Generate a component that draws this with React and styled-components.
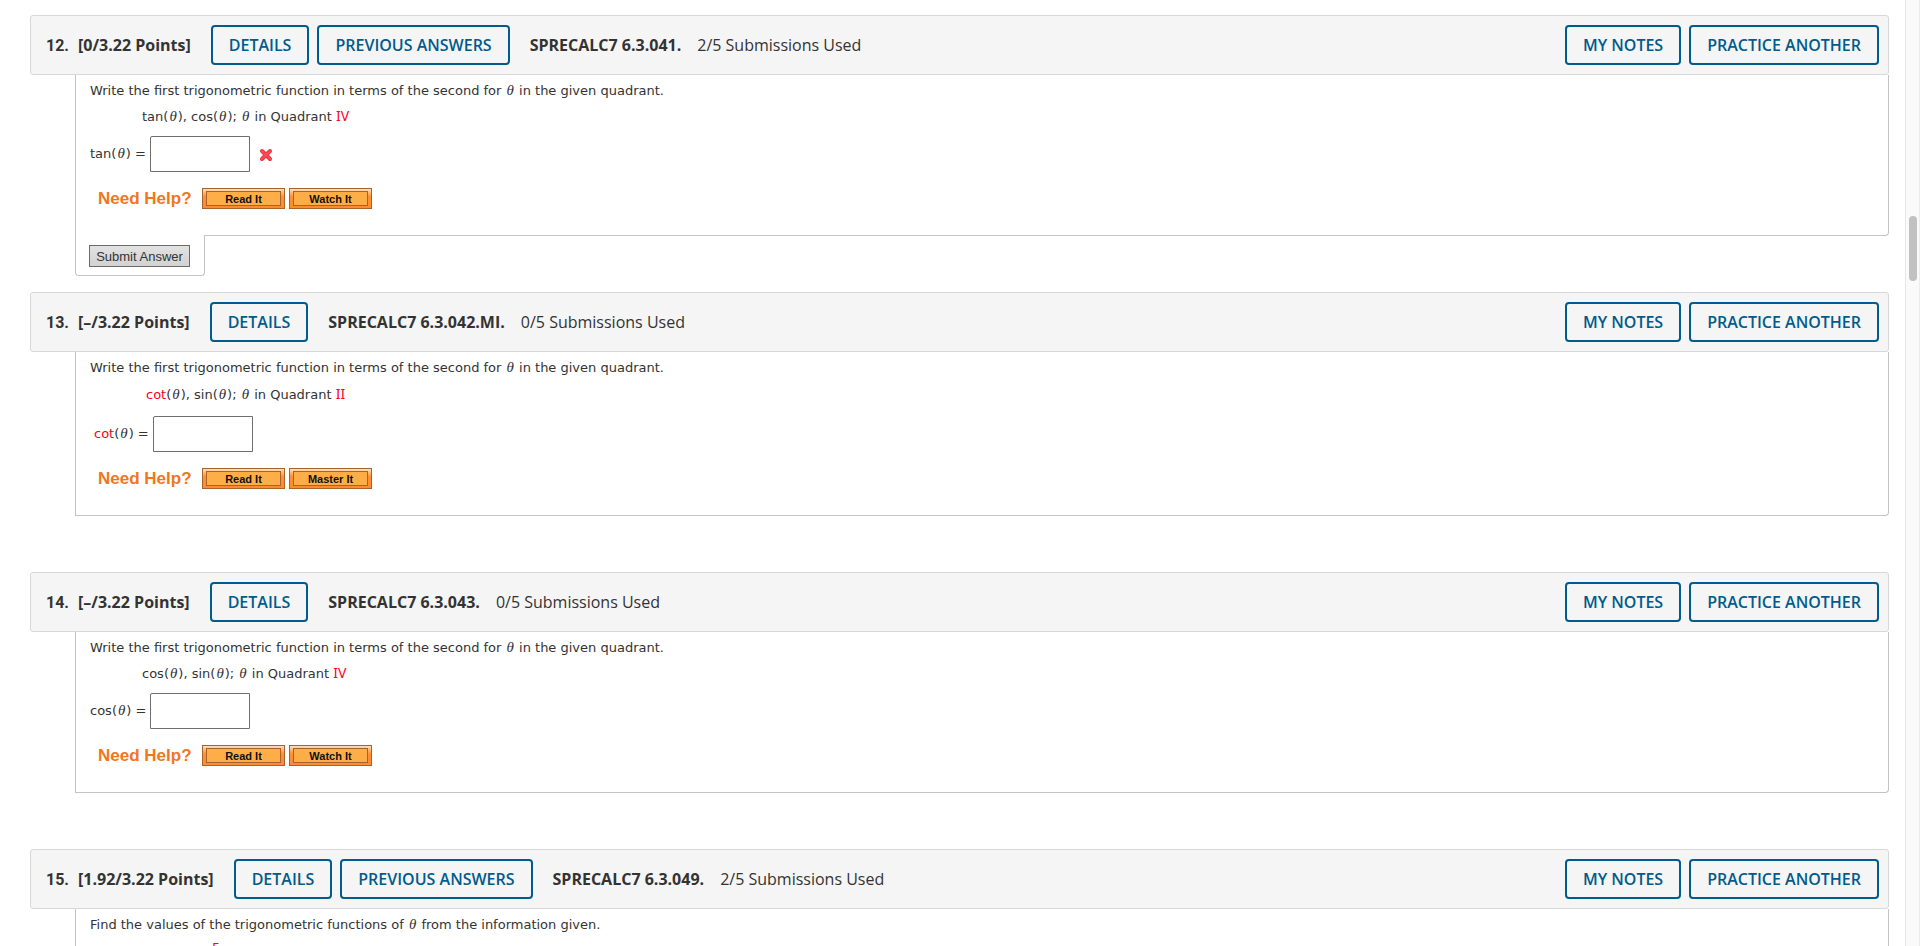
import React from "react";
import styled, { createGlobalStyle } from "styled-components";

const Global = createGlobalStyle`
  * { box-sizing: border-box; }
  html, body { margin: 0; background: #fff; }
  body { color: #333; font-family: "Open Sans", sans-serif; font-size: 16px; }
  p { margin: 0; }
`;

const Page = styled.div`
  display: flex;
  height: 100vh;
  overflow: hidden;
`;

const Questions = styled.main`
  flex: 1;
  min-width: 0;
  padding: 15px 16px 0 30px;
  overflow: hidden;
`;

const ScrollTrack = styled.div`
  width: 15px;
  flex: none;
  padding-top: 216px;
  background: #fafafa;
  border-left: 1px solid #e6e6e6;
  border-right: 1px solid #ececec;
`;

const ScrollThumb = styled.div`
  width: 8px;
  height: 65px;
  margin: 0 auto;
  border-radius: 4px;
  background: #c1c1c1;
`;

const Question = styled.section`
  margin-bottom: ${(p) => (p.$submit ? 16 : 56)}px;
`;

const Header = styled.header`
  display: flex;
  align-items: center;
  height: 60px;
  padding: 0 9px 0 15px;
  background: #f5f5f5;
  border: 1px solid #d8d8d8;
  border-radius: 3px;
  white-space: nowrap;
`;

const Number = styled.span`
  width: 32px;
  font-family: Roboto, sans-serif;
  font-weight: 700;
`;

const Points = styled.strong`
  font-weight: 700;
  margin-right: 20px;
`;

const Actions = styled.div`
  display: flex;
  gap: 8px;
  margin-left: ${(p) => (p.$end ? "auto" : "0")};
`;

const OutlineButton = styled.button`
  height: 40px;
  padding: 0 16px;
  color: #005b8e;
  background: transparent;
  border: 2px solid #005b8e;
  border-radius: 4px;
  font: 600 16px "Open Sans", sans-serif;
`;

const Code = styled.strong`
  margin: 0 16px 0 20px;
  font-weight: 700;
`;

const Panel = styled.div`
  margin-left: 45px;
  padding: 6px 14px 26px;
  border: 1px solid #c4c4c4;
  border-top: 0;
  border-radius: 0 0 4px 0;
  font: 13px/20px "DejaVu Sans", sans-serif;
`;

const Given = styled.p`
  padding-left: ${(p) => (p.$wide ? 56 : 52)}px;
  margin-top: ${(p) => (p.$wide ? 7 : 6)}px;
`;

const Theta = styled.i`
  margin: 0 1px;
  font-family: "Liberation Serif", serif;
  font-size: 15px;
  line-height: 1px;
`;

const Red = styled.span`
  color: #ff0019;
`;

const Quadrant = styled(Red)`
  font-family: "Noto Sans", sans-serif;
  font-size: 14px;
  line-height: 1px;
`;

const AnswerRow = styled.div`
  display: flex;
  align-items: center;
  gap: 4px;
  margin-top: ${(p) => (p.$wide ? 11 : 9)}px;
  padding-left: ${(p) => (p.$wide ? 4 : 0)}px;
`;

const AnswerInput = styled.input`
  width: 100px;
  height: 36px;
  border: 1px solid #6f6f6f;
  border-radius: 2px 0 0 0;
  background: #fff;
`;

const Wrong = styled.svg`
  width: 14px;
  height: 14px;
  margin: 2px 0 0 5px;
`;

const Help = styled.div`
  display: flex;
  align-items: center;
  gap: 4px;
  height: 21px;
  margin: 16px 0 0 8px;
`;

const HelpTitle = styled.span`
  width: 100px;
  color: #f07622;
  font: 700 17px "Liberation Sans", sans-serif;
`;

const HelpButton = styled.button`
  width: 83px;
  height: 21px;
  padding: 2px 3px;
  border: 1px solid #a8632c;
  background: linear-gradient(#ffe0bd, #ff9034 40%, #ff8a30);
`;

const HelpFace = styled.span`
  display: block;
  height: 15px;
  border: 1px solid #a8632c;
  background: #ffae47;
  color: #111;
  font: 700 11px/14px "Liberation Sans", sans-serif;
`;

const SubmitTab = styled.div`
  width: 130px;
  height: 41px;
  margin: -1px 0 0 45px;
  padding: 10px 13px;
  position: relative;
  background: #fff;
  border: 1px solid #c4c4c4;
  border-top: 0;
  border-radius: 0 0 4px 4px;
`;

const SubmitButton = styled.button`
  display: block;
  width: 101px;
  height: 22px;
  padding: 0;
  border: 1px solid #6b6b6b;
  background: linear-gradient(#e2e2e2, #d2d2d2);
  color: #333;
  font: 13px "Liberation Sans", sans-serif;
`;

const Numerator = styled.p`
  margin-top: 3px;
  padding-left: 122px;
`;

const theta = <Theta>θ</Theta>;

function Fn({ name, red }) {
  return <>{red ? <Red>{name}</Red> : name}({theta})</>;
}

const items = [
  { n: 12, points: "0/3.22", previous: true, code: "6.3.041.", used: 2, first: "tan", second: "cos", quadrant: "IV", help: "Watch It", wrong: true, submit: true },
  { n: 13, points: "–/3.22", code: "6.3.042.MI.", used: 0, first: "cot", second: "sin", quadrant: "II", help: "Master It", red: true },
  { n: 14, points: "–/3.22", code: "6.3.043.", used: 0, first: "cos", second: "sin", quadrant: "IV", help: "Watch It" },
  { n: 15, points: "1.92/3.22", previous: true, code: "6.3.049.", used: 2, values: true },
];

function QuadrantBody({ q }) {
  return (
    <>
      <p>Write the first trigonometric function in terms of the second for {theta} in the given quadrant.</p>
      <Given $wide={q.red}>
        <Fn name={q.first} red={q.red} />, <Fn name={q.second} />; {theta} in Quadrant <Quadrant>{q.quadrant}</Quadrant>
      </Given>
      <AnswerRow $wide={q.red}>
        <label htmlFor={`answer-${q.n}`}><Fn name={q.first} red={q.red} /> =</label>
        <AnswerInput id={`answer-${q.n}`} type="text" />
        {q.wrong && (
          <Wrong viewBox="0 0 14 14" role="img" aria-label="Incorrect">
            <path d="M3 3 11 11M11 3 3 11" stroke="#e8323f" strokeWidth="4" strokeLinecap="round" />
            <path d="M3 3 11 11M11 3 3 11" stroke="#ff4a55" strokeWidth="2" strokeLinecap="round" />
          </Wrong>
        )}
      </AnswerRow>
      <Help>
        <HelpTitle>Need Help?</HelpTitle>
        <HelpButton><HelpFace>Read It</HelpFace></HelpButton>
        <HelpButton><HelpFace>{q.help}</HelpFace></HelpButton>
      </Help>
    </>
  );
}

function ValuesBody() {
  return (
    <>
      <p>Find the values of the trigonometric functions of {theta} from the information given.</p>
      <Numerator><Red>5</Red></Numerator>
    </>
  );
}

export default function App() {
  return (
    <Page>
      <Global />
      <Questions>
        {items.map((q) => (
          <Question key={q.n} $submit={q.submit}>
            <Header>
              <Number>{q.n}.</Number>
              <Points>[{q.points} Points]</Points>
              <Actions>
                <OutlineButton>DETAILS</OutlineButton>
                {q.previous && <OutlineButton>PREVIOUS ANSWERS</OutlineButton>}
              </Actions>
              <Code>SPRECALC7 {q.code}</Code>
              <span>{q.used}/5 Submissions Used</span>
              <Actions $end>
                <OutlineButton>MY NOTES</OutlineButton>
                <OutlineButton>PRACTICE ANOTHER</OutlineButton>
              </Actions>
            </Header>
            <Panel>{q.values ? <ValuesBody /> : <QuadrantBody q={q} />}</Panel>
            {q.submit && (
              <SubmitTab><SubmitButton>Submit Answer</SubmitButton></SubmitTab>
            )}
          </Question>
        ))}
      </Questions>
      <ScrollTrack><ScrollThumb /></ScrollTrack>
    </Page>
  );
}
